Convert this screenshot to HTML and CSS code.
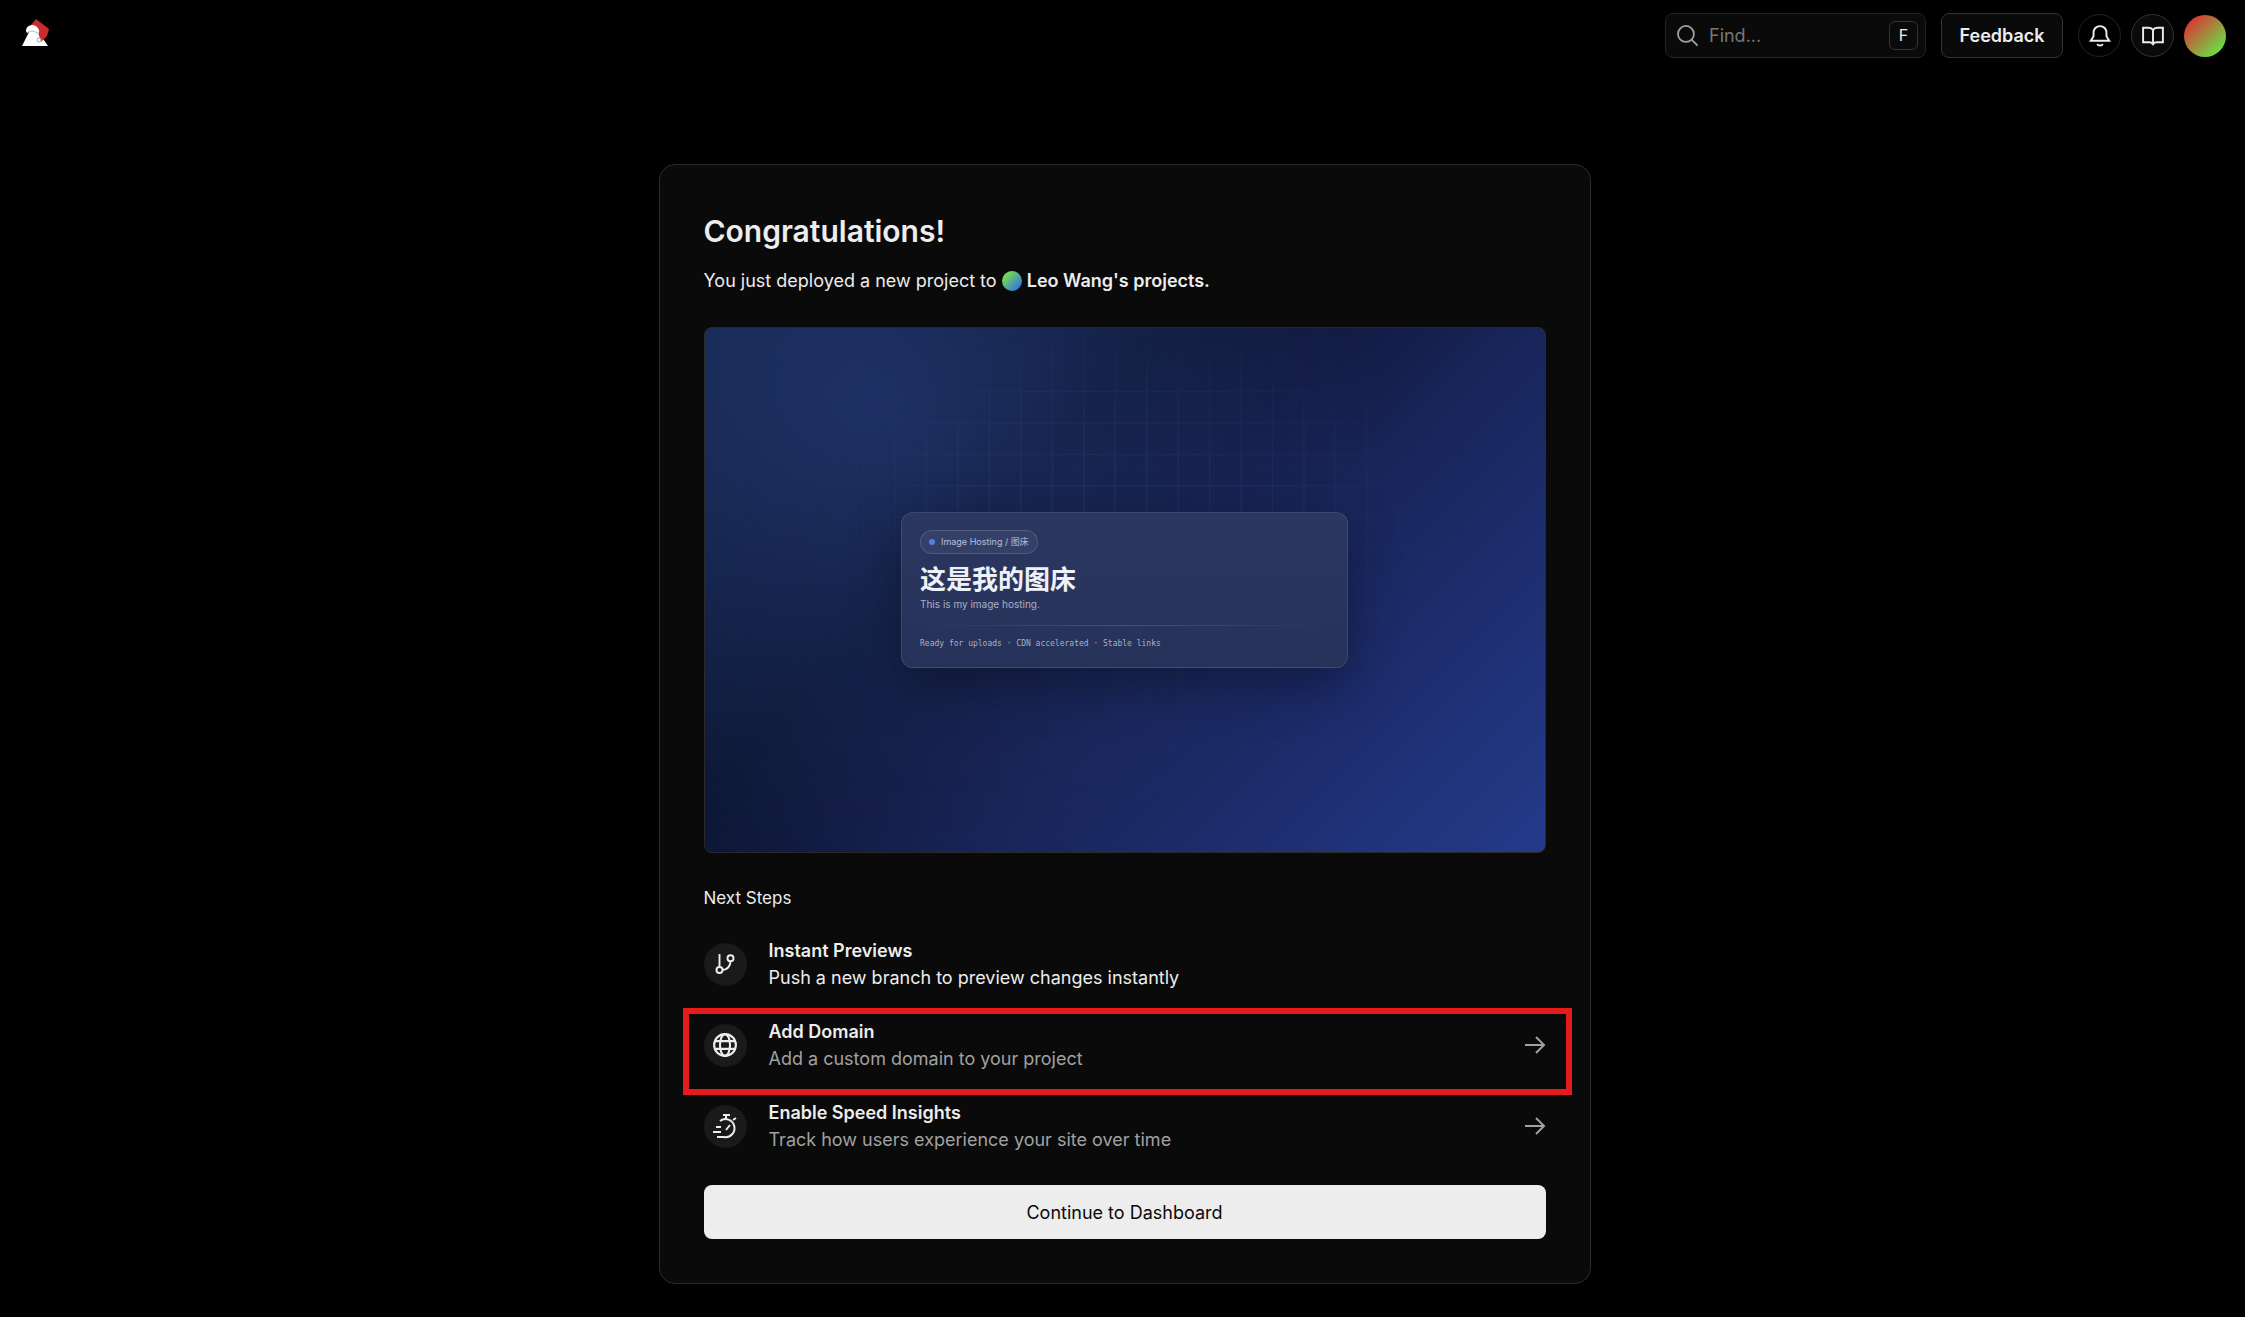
FILE: index.html
```html
<!DOCTYPE html>
<html lang="en">
<head>
    <meta charset="UTF-8">
    <meta name="viewport" content="width=device-width, initial-scale=1">
    <title>Congratulations!</title>
    <link rel="stylesheet" href="styles.css">
</head>
<body>
    <header class="topbar">
        <a class="logo" href="#" aria-label="Home">
            <svg width="26" height="28" viewBox="0 0 26 28">
                <path d="M11 6 L13 8 L26 27 H0 L7 13 Z" fill="#fff"/>
                <path d="M9 6 L14 0 L27 10 L25 17 L19 23 L16 13 Z" fill="#cb2b2b"/>
                <path d="M4 12 C4 8 7 6 11 6 C15 7 18 10 17 14 C13 12 9 11 5 14 Z" fill="#fff"/>
                <path d="M5 14 C9 11 13 12 17 15" fill="none" stroke="#bbb"/>
                <circle cx="17" cy="21" r="2" fill="#fff" stroke="#aaa" stroke-width="1"/>
            </svg>
        </a>
        <div class="topbar__actions">
            <label class="search">
                <svg class="search__icon" width="22" height="22" viewBox="0 0 16 16" fill="none" stroke="currentColor" stroke-width="1.3">
                    <circle cx="6.5" cy="6.5" r="5.8"/>
                    <path d="M10.6 10.6 L15 15"/>
                </svg>
                <input class="search__input" type="text" placeholder="Find..." aria-label="Find">
                <kbd class="search__key">F</kbd>
            </label>
            <button class="feedback" type="button">Feedback</button>
            <div class="topbar__round">
                <button class="round-btn round-btn--plain" type="button" aria-label="Notifications">
                    <svg width="22" height="22" viewBox="0 0 16 16" fill="none" stroke="currentColor" stroke-width="1.4">
                        <path d="M8 0.8 C5.2 0.8 3.3 2.8 3.3 5.6 V8.2 L1.3 11.4 H14.7 L12.7 8.2 V5.6 C12.7 2.8 10.8 0.8 8 0.8 Z"/>
                        <path d="M6 13.8 C6.5 15.3 9.5 15.3 10 13.8"/>
                    </svg>
                </button>
                <button class="round-btn" type="button" aria-label="Docs">
                    <svg width="22" height="22" viewBox="0 0 16 16" fill="none" stroke="currentColor" stroke-width="1.4">
                        <path d="M8 3.6 C7.3 2.4 6.2 2 5 2 H0.8 V12.6 H5.2 C6.6 12.6 7.4 13 8 14 C8.6 13 9.4 12.6 10.8 12.6 H15.2 V2 H11 C9.8 2 8.7 2.4 8 3.6 Z M8 3.6 V14"/>
                    </svg>
                </button>
                <button class="avatar" type="button" aria-label="Account"></button>
            </div>
        </div>
    </header>

    <main class="card">
        <h1 class="card__title">Congratulations!</h1>
        <p class="card__text">You just deployed a new project to <span class="team-dot"></span> <strong>Leo Wang's projects.</strong></p>

        <div class="preview">
            <svg class="preview__grid" viewBox="0 0 1280 800">
                <defs>
                    <pattern id="cells" width="48" height="48" patternUnits="userSpaceOnUse">
                        <path d="M1 0 V48 M0 1 H48" stroke="#9fb4ff" stroke-opacity=".07" stroke-width="2"/>
                    </pattern>
                    <radialGradient id="fade" cx=".5" cy=".35" r=".42">
                        <stop offset="0" stop-color="#fff"/>
                        <stop offset=".3" stop-color="#fff"/>
                        <stop offset="1" stop-color="#000"/>
                    </radialGradient>
                    <mask id="grid-mask"><rect width="1280" height="800" fill="url(#fade)"/></mask>
                </defs>
                <rect width="1280" height="800" fill="url(#cells)" mask="url(#grid-mask)"/>
            </svg>
            <section class="glass">
                <span class="glass__badge"><i class="glass__dot"></i>Image Hosting / 图床</span>
                <h2 class="glass__title">这是我的图床</h2>
                <p class="glass__text">This is my image hosting.</p>
                <div class="glass__line"></div>
                <p class="glass__foot">Ready for uploads · CDN accelerated · Stable links</p>
            </section>
        </div>

        <h2 class="card__subtitle">Next Steps</h2>
        <div class="steps">
            <div class="step">
                <span class="step__icon">
                    <svg width="22" height="22" viewBox="0 0 16 16" fill="none" stroke="currentColor" stroke-width="1.4">
                        <path d="M4 0.8 V10.2"/>
                        <circle cx="4" cy="12.4" r="2.2"/>
                        <circle cx="12" cy="3.8" r="2.2"/>
                        <path d="M6.2 12.4 C9.4 12.4 12 9.6 12 6"/>
                    </svg>
                </span>
                <span class="step__body">
                    <span class="step__name">Instant Previews</span>
                    <span class="step__desc step__desc--light">Push a new branch to preview changes instantly</span>
                </span>
            </div>
            <a class="step step--marked" href="#">
                <span class="step__icon">
                    <svg width="26" height="26" viewBox="0 0 16 16" fill="none" stroke="currentColor" stroke-width="1.3">
                        <circle cx="8" cy="8" r="6.7"/>
                        <ellipse cx="8" cy="8" rx="3.1" ry="6.7"/>
                        <path d="M1.8 5.6 H14.2 M1.8 10.4 H14.2"/>
                    </svg>
                </span>
                <span class="step__body">
                    <span class="step__name">Add Domain</span>
                    <span class="step__desc">Add a custom domain to your project</span>
                </span>
                <svg class="step__arrow" width="22" height="22" viewBox="0 0 22 22" fill="none" stroke="currentColor" stroke-width="2">
                    <path d="M1 11 H19 M12 3 L20 11 L12 19"/>
                </svg>
            </a>
            <a class="step" href="#">
                <span class="step__icon">
                    <svg width="26" height="26" viewBox="0 0 26 26" fill="none" stroke="currentColor" stroke-width="2">
                        <path d="M8 8 A9 9 0 1 1 12 24 H5"/>
                        <path d="M11 2 H18 M14 2 V6 M21 7 L24 5 M14 17 L18 12 M4 14 H9 M1 19 H9"/>
                    </svg>
                </span>
                <span class="step__body">
                    <span class="step__name">Enable Speed Insights</span>
                    <span class="step__desc">Track how users experience your site over time</span>
                </span>
                <svg class="step__arrow" width="22" height="22" viewBox="0 0 22 22" fill="none" stroke="currentColor" stroke-width="2">
                    <path d="M1 11 H19 M12 3 L20 11 L12 19"/>
                </svg>
            </a>
        </div>

        <button class="continue" type="button">Continue to Dashboard</button>
    </main>
</body>
</html>
```
FILE: styles.css
```css
* {
    box-sizing: border-box;
}
body {
    margin: 0;
    padding-left: 4px;
    background: #000;
    color: #ededed;
    font-family: Inter, "Noto Sans CJK SC", sans-serif;
    font-size: 18px;
    line-height: 27px;
}
h1, h2, p {
    margin: 0;
}
button, input, kbd {
    font: inherit;
    color: inherit;
}
button {
    padding: 0;
    cursor: pointer;
}
a {
    color: inherit;
    text-decoration: none;
}

/* top bar */
.topbar {
    display: flex;
    align-items: center;
    justify-content: space-between;
    height: 71px;
    padding: 0 19px 0 18px;
}
.logo {
    display: flex;
    margin-bottom: 6px;
}
.logo svg {
    overflow: visible;
}
.topbar__actions {
    display: flex;
    align-items: center;
    gap: 15px;
}
.search {
    display: flex;
    align-items: center;
    gap: 10px;
    width: 261px;
    height: 45px;
    padding: 0 7px 0 11px;
    background: #0a0a0a;
    border: 1px solid #242424;
    border-radius: 8px;
}
.search__icon {
    flex: none;
    color: #a1a1a1;
}
.search__input {
    flex: 1;
    min-width: 0;
    padding: 0;
    background: none;
    border: 0;
    outline: 0;
}
.search__input::placeholder {
    color: #777;
    opacity: 1;
}
.search__key {
    width: 29px;
    height: 29px;
    border: 1px solid #333;
    border-radius: 6px;
    font-size: 16px;
    text-align: center;
}
.feedback {
    width: 122px;
    height: 45px;
    background: #0a0a0a;
    border: 1px solid #333;
    border-radius: 8px;
    font-weight: 600;
}
.topbar__round {
    display: flex;
    align-items: center;
    gap: 10px;
}
.round-btn {
    display: flex;
    align-items: center;
    justify-content: center;
    width: 43px;
    height: 43px;
    background: #0a0a0a;
    border: 1px solid #333;
    border-radius: 50%;
}
.round-btn--plain {
    background: #000;
    border-color: #242424;
}
.avatar {
    width: 42px;
    height: 42px;
    border: 0;
    border-radius: 50%;
    background: linear-gradient(135deg, #dc3535 12%, #6bdc45 85%);
}

/* deploy card */
.card {
    width: 932px;
    max-width: 100%;
    margin: 93px auto 34px;
    padding: 44px;
    background: #0a0a0a;
    border: 1px solid #2a2a2a;
    border-radius: 16px;
}
.card__title {
    font-size: 30px;
    font-weight: 600;
    line-height: 44px;
}
.card__text {
    margin: 14px 0 33px;
}
.card__text strong {
    font-weight: 600;
}
.team-dot {
    display: inline-block;
    width: 20px;
    height: 20px;
    border-radius: 50%;
    background: linear-gradient(135deg, #7fe83f 10%, #2f6fe8 90%);
    vertical-align: -4px;
}
.card__subtitle {
    margin-top: 32px;
    font-size: 17px;
    font-weight: 400;
}

/* site preview */
.preview {
    position: relative;
    display: flex;
    align-items: center;
    justify-content: center;
    aspect-ratio: 16 / 10;
    overflow: hidden;
    border: 1px solid #2a2a2a;
    border-radius: 8px;
    background:
        radial-gradient(ellipse 60% 90% at 20% 15%, rgba(48, 72, 145, .5), transparent),
        linear-gradient(135deg, #0f1f40 0%, #0b1530 34%, #121a42 47%, #182559 60%, #1d2c6c 75%, #243a8a 100%);
}
.preview__grid {
    position: absolute;
    inset: 0;
    width: 100%;
    height: 100%;
}
.glass {
    position: relative;
    width: 447px;
    height: 156px;
    padding: 17px 18px;
    border: 1px solid rgba(255, 255, 255, .1);
    border-radius: 12px;
    background: linear-gradient(180deg, #2b3760, #263259);
    box-shadow: 0 16px 50px rgba(0, 0, 0, .35);
}
.glass__badge {
    display: inline-flex;
    align-items: center;
    gap: 6px;
    height: 24px;
    padding: 0 8px;
    border: 1px solid rgba(255, 255, 255, .14);
    border-radius: 12px;
    background: rgba(255, 255, 255, .05);
    color: #b9c0d4;
    font-size: 9px;
    line-height: 12px;
    vertical-align: top;
}
.glass__dot {
    width: 6px;
    height: 6px;
    border-radius: 50%;
    background: #4f7fe8;
}
.glass__title {
    margin-top: 6px;
    color: #eef1f8;
    font-size: 26px;
    font-weight: 700;
    line-height: 34px;
}
.glass__text {
    color: #a9b1c8;
    font-size: 10px;
    line-height: 14px;
}
.glass__line {
    height: 1px;
    margin: 14px 0 12px;
    background: linear-gradient(90deg, transparent, rgba(255, 255, 255, .15), transparent);
}
.glass__foot {
    color: #a9b1c8;
    font-family: "DejaVu Sans Mono", monospace;
    font-size: 8px;
    line-height: 12px;
}

/* next steps */
.steps {
    display: grid;
    gap: 27px;
    margin: 25px 0 32px;
}
.step {
    position: relative;
    display: flex;
    align-items: center;
    gap: 22px;
    height: 54px;
}
/* red frame around the highlighted step */
.step--marked::after {
    content: "";
    position: absolute;
    inset: -10px -26px -23px -21px;
    border: 6px solid #e61b1b;
}
.step__icon {
    display: flex;
    align-items: center;
    justify-content: center;
    width: 43px;
    height: 43px;
    border-radius: 50%;
    background: #1a1a1a;
}
.step__body {
    display: flex;
    flex: 1;
    flex-direction: column;
}
.step__name {
    font-weight: 600;
}
.step__desc {
    color: #a1a1a1;
}
.step__desc--light {
    color: #ededed;
}
.step__arrow {
    color: #a1a1a1;
}

.continue {
    display: block;
    width: 100%;
    height: 54px;
    border: 0;
    border-radius: 8px;
    background: #ededed;
    color: #0a0a0a;
}
```
